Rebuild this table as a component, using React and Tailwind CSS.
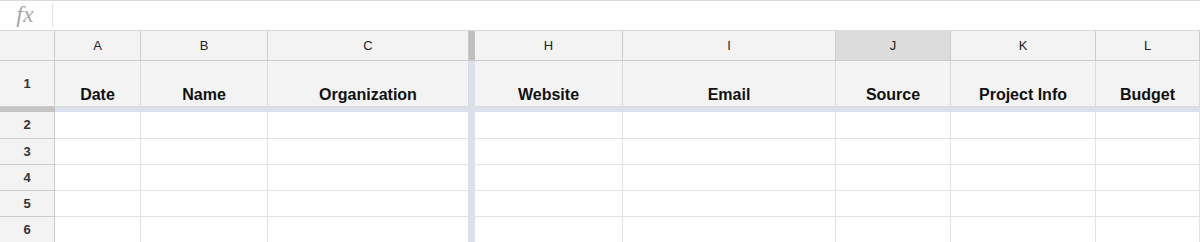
import React from "react";

const cols = [
  { key: "A", title: "Date" },
  { key: "B", title: "Name" },
  { key: "C", title: "Organization" },
  { key: "sep" },
  { key: "H", title: "Website" },
  { key: "I", title: "Email" },
  { key: "J", title: "Source", selected: true },
  { key: "K", title: "Project Info" },
  { key: "L", title: "Budget" },
];

const bodyRows = [
  { n: 2, h: "h-[27px]" },
  { n: 3, h: "h-[26px]" },
  { n: 4, h: "h-[26px]" },
  { n: 5, h: "h-[26px]" },
  { n: 6, h: "h-[26px]" },
];

const gridCols =
  "grid grid-cols-[55px_86px_127px_201px_6px_148px_213px_115px_145px_1fr]";

export default function App() {
  return (
    <div
      className="w-[1200px] h-[242px] overflow-hidden bg-white text-[#222]"
      style={{ fontFamily: '"Liberation Sans", Arial, sans-serif' }}
    >
      {/* formula bar */}
      <div className="flex h-[31px] border-t border-b border-[#d9d9d9] bg-white">
        <div className="w-[53px] flex items-center justify-center border-r border-[#e0e0e0] my-[3px]">
          <span
            className="text-[24px] italic text-[#a8a8a8] leading-none -mt-[3px] -ml-[2px]"
            style={{ fontFamily: '"Liberation Serif", "Times New Roman", serif' }}
          >
            fx
          </span>
        </div>
        <div className="flex-1" />
      </div>

      {/* column letters */}
      <div className={`${gridCols} h-[30px]`}>
        <div className="bg-[#f3f3f3] border-r border-b border-[#cccccc]" />
        {cols.map((c) =>
          c.key === "sep" ? (
            <div key="sep" className="bg-[#bfbfbf] border-b border-[#cccccc]" />
          ) : (
            <div
              key={c.key}
              className={`flex items-center justify-center text-[13px] text-[#222] border-r border-b border-[#cccccc] ${
                c.selected ? "bg-[#dcdcdc]" : "bg-[#f3f3f3]"
              }`}
            >
              {c.key}
            </div>
          )
        )}
      </div>

      {/* frozen header row */}
      <div className={`${gridCols} h-[46px]`}>
        <div className="flex items-center justify-center bg-[#f3f3f3] border-r border-b border-[#cccccc] text-[13px] font-bold text-[#333]">
          1
        </div>
        {cols.map((c) =>
          c.key === "sep" ? (
            <div key="sep" className="bg-[#dbe0ea]" />
          ) : (
            <div
              key={c.key}
              className="flex items-end justify-center pb-[2px] leading-[18px] bg-[#f3f3f3] border-r border-b border-[#dadada] text-[16px] font-bold text-[#111]"
            >
              {c.title}
            </div>
          )
        )}
      </div>

      {/* frozen row divider */}
      <div className={`${gridCols} h-[5px]`}>
        <div className="bg-[#c4c4c4]" />
        {cols.map((c) => (
          <div key={c.key} className="bg-[#dbe0ea]" />
        ))}
      </div>

      {/* body rows */}
      {bodyRows.map((r) => (
        <div key={r.n} className={`${gridCols} ${r.h}`}>
          <div className="flex items-center justify-center bg-[#f3f3f3] border-r border-b border-[#cccccc] text-[13px] font-bold text-[#333]">
            {r.n}
          </div>
          {cols.map((c) =>
            c.key === "sep" ? (
              <div key="sep" className="bg-[#dbe0ea]" />
            ) : (
              <div key={c.key} className="bg-white border-r border-b border-[#e2e2e2]" />
            )
          )}
        </div>
      ))}
    </div>
  );
}
